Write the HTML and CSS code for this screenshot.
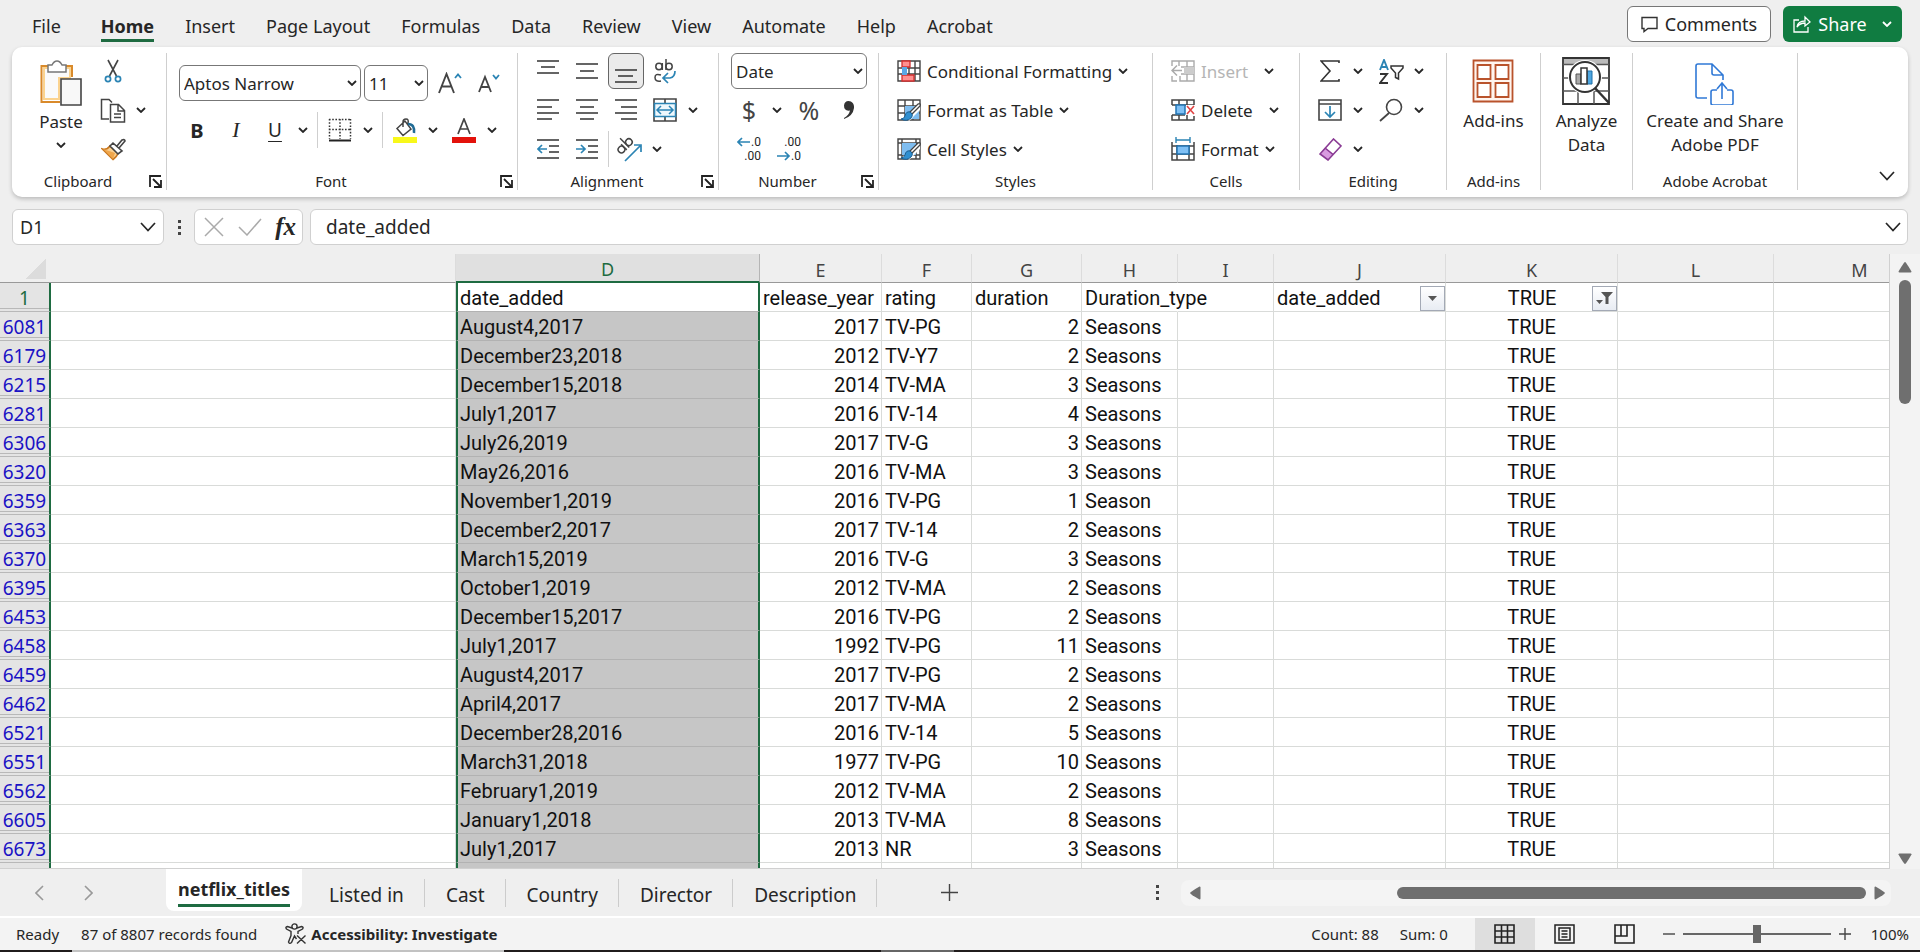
FILE: index.html
```html
<!DOCTYPE html>
<html lang="en">
<head>
    <meta charset="UTF-8">
    <meta name="viewport" content="width=device-width, initial-scale=1.0">
    <title>netflix_titles</title>
    <link rel="stylesheet" href="styles.css">
</head>
<body>
    <!-- shared icons -->
    <svg class="defs" aria-hidden="true">
        <symbol id="chev" viewBox="0 0 10 6"><path d="M1 1l4 4 4-4" fill="none" stroke="currentColor" stroke-width="1.8"/></symbol>
        <symbol id="chev-lg" viewBox="0 0 16 10"><path d="M1 1l7 7.500L15 1" fill="none" stroke="currentColor" stroke-width="1.7"/></symbol>
        <symbol id="launch" viewBox="0 0 13 13"><path d="M1 12V1h11M4 4l7 7M12 5v7H5" fill="none" stroke="#222" stroke-width="1.8"/></symbol>
        <symbol id="brush" viewBox="0 0 24 22"><path d="M23 7 15 15l-2-2 8-8q3-1 2 2z" fill="#fff" stroke="#444" stroke-width="1.3"/><path d="M13 13q-4-1-5 4-1 3-4 3 6 3 10-1 2-2 1-4z" fill="#2f8fd0" stroke="#1b5f93"/></symbol>
    </svg>

    <header class="tab-bar">
        <nav class="ribbon-tabs">
            <a href="#" class="file">File</a>
            <a href="#" class="active">Home</a>
            <a href="#">Insert</a>
            <a href="#">Page Layout</a>
            <a href="#">Formulas</a>
            <a href="#">Data</a>
            <a href="#">Review</a>
            <a href="#">View</a>
            <a href="#">Automate</a>
            <a href="#">Help</a>
            <a href="#">Acrobat</a>
        </nav>
        <div class="top-actions">
            <button class="comments-btn">
                <svg width="17" height="17" viewBox="0 0 17 17"><path d="M1 1.500h15v11H7l-4 3v-3H1z" fill="none" stroke="#333" stroke-width="1.400"/></svg>
                Comments
            </button>
            <button class="share-btn">
                <svg width="18" height="18" viewBox="0 0 18 18"><path d="M6 5H1v12h14v-5M4 12q1-6 8-6V2l5 5-5 4V8q-5 0-8 4z" fill="none" stroke="#fff" stroke-width="1.300"/></svg>
                Share
                <svg class="chev"><use href="#chev"/></svg>
            </button>
        </div>
    </header>

    <div class="ribbon">
        <section class="group clipboard">
            <div class="group-body">
                <button class="big-btn paste">
                    <svg width="42" height="46" viewBox="0 0 42 46"><path d="M10 6H1.500v36H20M25 6h7v11" fill="none" stroke="#d98a2b" stroke-width="2"/><path d="M4 8v31h15V18h11V8z" fill="#fafafa" stroke="#fbd38f" stroke-width="2"/><path d="M8 12V5h4q2-4 5-4t5 4h4v7z" fill="#fff" stroke="#777" stroke-width="1.500"/><path d="M21 19h20v26H21z" fill="#f8f8f8" stroke="#444" stroke-width="1.600"/></svg>
                    <span>Paste</span>
                    <svg class="chev"><use href="#chev"/></svg>
                </button>
                <div class="rows">
                    <div class="row">
                        <button class="icon-btn" aria-label="Cut"><svg width="18" height="24" viewBox="0 0 18 24"><path d="M4 1l8.500 16M14 1 5.500 17" stroke="#444" stroke-width="1.600"/><g fill="none" stroke="#2b84b4" stroke-width="1.700"><circle cx="4" cy="20" r="2.600"/><circle cx="14" cy="20" r="2.600"/></g></svg></button>
                    </div>
                    <div class="row">
                        <button class="icon-btn" aria-label="Copy"><svg width="26" height="25" viewBox="0 0 26 25"><path d="M9 21H1.500V1.500H9l3 3" fill="none" stroke="#444" stroke-width="1.500"/><path d="M10.500 6.500h8l6 6V24h-14zM18 7v6h6M14 16h7M14 19.500h7" fill="none" stroke="#444" stroke-width="1.500"/></svg></button>
                        <button class="drop" aria-label="Copy options"><svg class="chev"><use href="#chev"/></svg></button>
                    </div>
                    <div class="row">
                        <button class="icon-btn" aria-label="Format Painter"><svg width="25" height="23" viewBox="0 0 25 23"><path d="M9 8Q6 12 1.500 11L12 21.500q4-3 5-6z" fill="#f8cf90" stroke="#c9761c" stroke-width="1.600"/><path d="M2 11l12 4-2 6z" fill="#f0a64b"/><path d="M9 8l3-3 9 8-4 3zM16 8l5-6q3-1 3 1l-6 7" fill="#fff" stroke="#444" stroke-width="1.600"/></svg></button>
                    </div>
                </div>
            </div>
            <footer><h2>Clipboard</h2><button class="launch" aria-label="Clipboard settings"><svg width="13" height="13"><use href="#launch"/></svg></button></footer>
        </section>

        <section class="group font">
            <div class="group-body rows">
                <div class="row">
                    <div class="select wide">
                        <select aria-label="Font"><option>Aptos Narrow</option></select>
                        <svg class="chev"><use href="#chev"/></svg>
                    </div>
                    <div class="select size">
                        <select aria-label="Font size"><option>11</option></select>
                        <svg class="chev"><use href="#chev"/></svg>
                    </div>
                    <button class="icon-btn" aria-label="Increase font size"><svg width="24" height="22" viewBox="0 0 24 22"><path d="M1 21 8.500 2 16 21M4 14.500h9" fill="none" stroke="#444" stroke-width="1.900"/><path d="M17 6l3-3.500L23 6" fill="none" stroke="#2b84b4" stroke-width="1.800"/></svg></button>
                    <button class="icon-btn" aria-label="Decrease font size"><svg width="22" height="20" viewBox="0 0 22 20"><path d="M1 19 7 4l6 15M3.500 14h7" fill="none" stroke="#444" stroke-width="1.800"/><path d="M15 2l3 3.500L21 2" fill="none" stroke="#2b84b4" stroke-width="1.800"/></svg></button>
                </div>
                <div class="row">
                    <button class="icon-btn bold">B</button>
                    <button class="icon-btn italic">I</button>
                    <div class="split">
                        <button class="icon-btn underline">U</button>
                        <button class="drop" aria-label="Underline options"><svg class="chev"><use href="#chev"/></svg></button>
                    </div>
                    <span class="sep"></span>
                    <div class="split">
                        <button class="icon-btn" aria-label="Borders"><svg width="24" height="24" viewBox="0 0 24 24"><path d="M1.500 1v20M22.500 1v20M12 1v20M1 1.500h22M1 11.500h22" stroke="#333" stroke-width="1.500" stroke-dasharray="1.600 1.600"/><path d="M1 22.500h22" stroke="#222" stroke-width="2"/></svg></button>
                        <button class="drop" aria-label="Border options"><svg class="chev"><use href="#chev"/></svg></button>
                    </div>
                    <span class="sep"></span>
                    <div class="split">
                        <button class="icon-btn" aria-label="Fill Color"><svg width="24" height="25" viewBox="0 0 24 25"><path d="M4 10.500 12 3l6 8-8 6.500zM10 9V4q0-3 3-3t2 4v3" fill="#fff" stroke="#444" stroke-width="1.500"/><path d="M15 6q7 0 6 9" fill="none" stroke="#1f6a94" stroke-width="2.500"/><path d="M0 19h24v6H0z" fill="#f8f81a"/></svg></button>
                        <button class="drop" aria-label="Fill options"><svg class="chev"><use href="#chev"/></svg></button>
                    </div>
                    <div class="split">
                        <button class="icon-btn" aria-label="Font Color"><svg width="24" height="25" viewBox="0 0 24 25"><path d="M6 16l6-15 6 15M8 11h8" fill="none" stroke="#444" stroke-width="1.700"/><path d="M0 19h24v6H0z" fill="#e3120b"/></svg></button>
                        <button class="drop" aria-label="Font color options"><svg class="chev"><use href="#chev"/></svg></button>
                    </div>
                </div>
            </div>
            <footer><h2>Font</h2><button class="launch" aria-label="Font settings"><svg width="13" height="13"><use href="#launch"/></svg></button></footer>
        </section>

        <section class="group alignment">
            <div class="group-body rows">
                <div class="row">
                    <button class="icon-btn" aria-label="Top Align"><svg width="22" height="24" viewBox="0 0 22 24"><path d="M0 2h22M4 8h14M0 14h22" stroke="#333" stroke-width="1.600"/></svg></button>
                    <button class="icon-btn" aria-label="Middle Align"><svg width="22" height="24" viewBox="0 0 22 24"><path d="M0 5h22M4 12h14M0 19h22" stroke="#333" stroke-width="1.600"/></svg></button>
                    <button class="icon-btn pressed" aria-label="Bottom Align"><svg width="22" height="24" viewBox="0 0 22 24"><path d="M0 11h22M3 17h15M0 23h22" stroke="#333" stroke-width="1.600"/></svg></button>
                    <button class="icon-btn" aria-label="Wrap Text"><svg width="24" height="26" viewBox="0 0 24 26"><g fill="none" stroke="#444" stroke-width="1.500"><circle cx="6" cy="8.500" r="3.200"/><path d="M9.300 5v7M13 1v11"/><circle cx="16" cy="8.500" r="3.200"/><path d="M8 17q-6-2-6 2.500T8 23"/></g><path d="M22 13q0 6-5 7h-6m4-5-5 5 5 5" fill="none" stroke="#2b84b4" stroke-width="1.700"/></svg></button>
                </div>
                <div class="row">
                    <button class="icon-btn" aria-label="Align Left"><svg width="22" height="24" viewBox="0 0 22 24"><path d="M0 2h22M0 9h15M0 15h22M0 21h15" stroke="#333" stroke-width="1.600"/></svg></button>
                    <button class="icon-btn" aria-label="Center"><svg width="22" height="24" viewBox="0 0 22 24"><path d="M0 2h22M4 9h14M0 15h22M4 21h14" stroke="#333" stroke-width="1.600"/></svg></button>
                    <button class="icon-btn" aria-label="Align Right"><svg width="22" height="24" viewBox="0 0 22 24"><path d="M0 2h22M6 9h16M0 15h22M6 21h16" stroke="#333" stroke-width="1.600"/></svg></button>
                    <div class="split">
                        <button class="icon-btn" aria-label="Merge and Center"><svg width="24" height="24" viewBox="0 0 24 24"><path d="M1 1h22v22H1zM12 1v4M12 19v4" fill="#fff" stroke="#444" stroke-width="1.600"/><path d="M1.500 5.500h21v13h-21z" fill="#eef7fc" stroke="#2b84b4" stroke-width="1.500"/><path d="M4 12h16M8 8l-4 4 4 4M16 8l4 4-4 4" fill="none" stroke="#2b84b4" stroke-width="1.500"/></svg></button>
                        <button class="drop" aria-label="Merge options"><svg class="chev"><use href="#chev"/></svg></button>
                    </div>
                </div>
                <div class="row">
                    <button class="icon-btn" aria-label="Decrease Indent"><svg width="22" height="22" viewBox="0 0 22 22"><path d="M0 2h22M12 8h10M12 14h10M0 20h22" stroke="#333" stroke-width="1.600"/><path d="M10 11H1m4-4-4 4 4 4" fill="none" stroke="#2b84b4" stroke-width="1.700"/></svg></button>
                    <button class="icon-btn" aria-label="Increase Indent"><svg width="22" height="22" viewBox="0 0 22 22"><path d="M0 2h22M12 8h10M12 14h10M0 20h22" stroke="#333" stroke-width="1.600"/><path d="M0 11h9M5 7l4 4-4 4" fill="none" stroke="#2b84b4" stroke-width="1.700"/></svg></button>
                    <span class="sep"></span>
                    <div class="split">
                        <button class="icon-btn" aria-label="Orientation"><svg width="26" height="26" viewBox="0 0 26 26"><g transform="rotate(-45 9 10)" fill="none" stroke="#444" stroke-width="1.500"><circle cx="4" cy="10" r="3.300"/><path d="M7.500 6v8M11 1v13"/><circle cx="14.500" cy="10" r="3.300"/></g><path d="M9 25 24 10M18 9h7v7" fill="none" stroke="#2b84b4" stroke-width="1.700"/></svg></button>
                        <button class="drop" aria-label="Orientation options"><svg class="chev"><use href="#chev"/></svg></button>
                    </div>
                </div>
            </div>
            <footer><h2>Alignment</h2><button class="launch" aria-label="Alignment settings"><svg width="13" height="13"><use href="#launch"/></svg></button></footer>
        </section>

        <section class="group number">
            <div class="group-body rows">
                <div class="row">
                    <div class="select format">
                        <select aria-label="Number format"><option>Date</option></select>
                        <svg class="chev"><use href="#chev"/></svg>
                    </div>
                </div>
                <div class="row">
                    <div class="split">
                        <button class="icon-btn symbol">$</button>
                        <button class="drop" aria-label="Currency options"><svg class="chev"><use href="#chev"/></svg></button>
                    </div>
                    <button class="icon-btn symbol">%</button>
                    <button class="icon-btn" aria-label="Comma Style"><svg width="12" height="20" viewBox="0 0 12 20"><path d="M5.500 1C9 1 11.500 4 11 8q-1 8-10 11v-1q5-3 6-7.500Q1 11.500 1 5.500 1.500 1 5.500 1z" fill="#333"/></svg></button>
                </div>
                <div class="row">
                    <button class="icon-btn decimals"><svg width="14" height="10" viewBox="0 0 14 10"><path d="M13 5H1m4-4-4 4 4 4" fill="none" stroke="#2b84b4" stroke-width="1.700"/></svg><span>.0</span><span>.00</span></button>
                    <button class="icon-btn decimals"><span>.00</span><svg width="14" height="10" viewBox="0 0 14 10"><path d="M0 5h12M8 1l4 4-4 4" fill="none" stroke="#2b84b4" stroke-width="1.700"/></svg><span>.0</span></button>
                </div>
            </div>
            <footer><h2>Number</h2><button class="launch" aria-label="Number settings"><svg width="13" height="13"><use href="#launch"/></svg></button></footer>
        </section>

        <section class="group styles">
            <div class="group-body rows">
                <button class="text-btn">
                    <svg width="24" height="22" viewBox="0 0 24 22"><path d="M1 1h22v20H1zM1 8h22M1 14h22M6 1v20M12 1v20M18 1v20" fill="#fff" stroke="#444" stroke-width="1.400"/><path d="M5 1h8v6H5zM5 15h12v6H5z" fill="#ff8f8f" stroke="#d22f2f" stroke-width="1.300"/><path d="M5 7h5v8H5z" fill="#5aa7e6"/></svg>
                    Conditional Formatting <svg class="chev"><use href="#chev"/></svg>
                </button>
                <button class="text-btn">
                    <svg width="24" height="22" viewBox="0 0 24 22"><path d="M1 1h22v20H1zM8 1v20M16 1v20M1 7h22M1 14h22" fill="#fff" stroke="#444" stroke-width="1.400"/><path d="M8 7h14v13H8z" fill="#7fbdf0"/><path d="M9 18 23 5v6L12 22z" fill="#fff"/><use href="#brush" width="24" height="22"/></svg>
                    Format as Table <svg class="chev"><use href="#chev"/></svg>
                </button>
                <button class="text-btn">
                    <svg width="24" height="22" viewBox="0 0 24 22"><path d="M1 1h22v20H1zM5 1v20M19 1v20M1 5h22M1 17h22" fill="#fff" stroke="#444" stroke-width="1.400"/><path d="M5 5h14v12H5z" fill="#7fbdf0"/><path d="M9 18 23 5v6L12 22z" fill="#fff"/><use href="#brush" width="24" height="22"/></svg>
                    Cell Styles <svg class="chev"><use href="#chev"/></svg>
                </button>
            </div>
            <footer><h2>Styles</h2></footer>
        </section>

        <section class="group cells">
            <div class="group-body rows">
                <div class="row">
                    <button class="text-btn" disabled>
                        <svg width="24" height="22" viewBox="0 0 24 22"><path d="M1 6V1h22v20H9v-5M1 16v5h5M8 1v5M16 1v20M10 7h13M10 14h13" fill="none" stroke="#aaa" stroke-width="1.400"/><path d="M13 7h10v7H13z" fill="#ccc"/><path d="M11 10.500H1m5-5-5 5 5 5" fill="none" stroke="#aaa" stroke-width="1.500"/></svg>
                        Insert
                    </button>
                    <button class="drop" aria-label="Insert options"><svg class="chev"><use href="#chev"/></svg></button>
                </div>
                <div class="row">
                    <button class="text-btn">
                        <svg width="24" height="22" viewBox="0 0 24 22"><path d="M1 6V1h22v5M1 16v5h22v-4M8 1v5M16 1v5M8 16v5M16 16v5M1 6h22M1 16h13" fill="none" stroke="#444" stroke-width="1.500"/><path d="M5 6h9v9H5z" fill="#7fc0f5" stroke="#2376b5" stroke-width="1.500"/><path d="M15 6h9v10h-9z" fill="#fff"/><path d="M16 7l7 8M23 7l-7 8" stroke="#e04343" stroke-width="1.600"/></svg>
                        Delete
                    </button>
                    <button class="drop" aria-label="Delete options"><svg class="chev"><use href="#chev"/></svg></button>
                </div>
                <div class="row">
                    <button class="text-btn">
                        <svg width="24" height="24" viewBox="0 0 24 24"><path d="M1 5v18h22V5M6 8v15M18 8v15M1 9h22M1 17h22" fill="none" stroke="#444" stroke-width="1.500"/><path d="M6 9h12v8H6z" fill="#7fc0f5" stroke="#2376b5" stroke-width="1.500"/><path d="M5 3h14M5 0v6M19 0v6" stroke="#2b84b4" stroke-width="1.400"/></svg>
                        Format <svg class="chev"><use href="#chev"/></svg>
                    </button>
                </div>
            </div>
            <footer><h2>Cells</h2></footer>
        </section>

        <section class="group editing">
            <div class="group-body rows">
                <div class="row">
                    <div class="split">
                        <button class="icon-btn" aria-label="AutoSum"><svg width="20" height="22" viewBox="0 0 20 22"><path d="M19 3V1H1l9 10-9 10h18v-2" fill="none" stroke="#333" stroke-width="1.600"/></svg></button>
                        <button class="drop" aria-label="Sum options"><svg class="chev"><use href="#chev"/></svg></button>
                    </div>
                    <div class="split">
                        <button class="icon-btn" aria-label="Sort and Filter"><svg width="25" height="25" viewBox="0 0 25 25"><path d="M1 11 5 1l4 10M2.500 8h5" fill="none" stroke="#2b84b4" stroke-width="1.900"/><path d="M1 15h7L1 24h8" fill="none" stroke="#333" stroke-width="1.900"/><path d="M12 7h12v2l-4.500 5v6l-3-1.500V14L12 9z" fill="none" stroke="#333" stroke-width="1.500"/></svg></button>
                        <button class="drop" aria-label="Sort options"><svg class="chev"><use href="#chev"/></svg></button>
                    </div>
                </div>
                <div class="row">
                    <div class="split">
                        <button class="icon-btn" aria-label="Fill"><svg width="24" height="22" viewBox="0 0 24 22"><path d="M1 1h22v20H1zM1 5h22" fill="none" stroke="#444" stroke-width="1.600"/><path d="M12 7v10m-5-4 5 5 5-5" fill="none" stroke="#2b84b4" stroke-width="1.700"/></svg></button>
                        <button class="drop" aria-label="Fill options"><svg class="chev"><use href="#chev"/></svg></button>
                    </div>
                    <div class="split">
                        <button class="icon-btn" aria-label="Find and Select"><svg width="24" height="24" viewBox="0 0 24 24"><circle cx="15" cy="9" r="7.500" fill="none" stroke="#444" stroke-width="1.600"/><path d="M10 15l-9 8" stroke="#444" stroke-width="1.700"/></svg></button>
                        <button class="drop" aria-label="Find options"><svg class="chev"><use href="#chev"/></svg></button>
                    </div>
                </div>
                <div class="row">
                    <div class="split">
                        <button class="icon-btn" aria-label="Clear"><svg width="23" height="23" viewBox="0 0 23 23"><path d="M1 16 6 9.500l8 6L9 22z" fill="#d99be0"/><path d="M1 16 14.500 1 22 8 9 22zM6 10l8 6.500" fill="none" stroke="#8a3b94" stroke-width="1.600"/></svg></button>
                        <button class="drop" aria-label="Clear options"><svg class="chev"><use href="#chev"/></svg></button>
                    </div>
                </div>
            </div>
            <footer><h2>Editing</h2></footer>
        </section>

        <section class="group addins">
            <div class="group-body">
                <button class="big-btn">
                    <svg width="42" height="48" viewBox="0 0 42 48"><path d="M1.500 3.500h39v41h-39z" fill="#fff5ef" stroke="#b9532c" stroke-width="1.800"/><path d="M5.500 8h13v14h-13zM23.500 8h13v14h-13zM5.500 26h13v14h-13zM23.500 26h13v14h-13z" fill="#fff" stroke="#b9532c" stroke-width="1.800"/></svg>
                    <span>Add-ins</span>
                </button>
            </div>
            <footer><h2>Add-ins</h2></footer>
        </section>

        <section class="group analyze">
            <div class="group-body">
                <button class="big-btn">
                    <svg width="48" height="48" viewBox="0 0 48 48"><path d="M1 1h46v46H1z" fill="#fff" stroke="#333" stroke-width="1.800"/><path d="M2 2h44v5H2z" fill="#bbb"/><path d="M1 7.500h46M1 21h46M1 34h46M16 34v13M32 34v13" stroke="#555" stroke-width="1.500"/><circle cx="23" cy="20" r="17" fill="#fff"/><circle cx="23" cy="20" r="15" fill="#fff" stroke="#333" stroke-width="2"/><path d="M14 17h5v10h-5z" fill="#aaa" stroke="#555"/><path d="M25 14h5v13h-5z" fill="#4ea6e0" stroke="#1d6fa8"/><path d="M19 11h6v16h-6z" fill="#fff" stroke="#333" stroke-width="1.500"/><path d="M33 31l14 15" stroke="#333" stroke-width="2.500"/></svg>
                    <span>Analyze<br>Data</span>
                </button>
            </div>
        </section>

        <section class="group acrobat">
            <div class="group-body">
                <button class="big-btn">
                    <svg width="39" height="48" viewBox="0 0 39 48"><path d="M12 41H3q-2 0-2-2V9q0-2 2-2h14l11 11v5M17 7v9q0 2 2 2h9" fill="none" stroke="#3079d6" stroke-width="1.600"/><path d="M22 33h-4q-2 0-2 2v11q0 2 2 2h18q2 0 2-2V35q0-2-2-2h-4M27 42V26m-5 6 5-6 5 6" fill="none" stroke="#3079d6" stroke-width="1.600"/></svg>
                    <span>Create and Share<br>Adobe PDF</span>
                </button>
            </div>
            <footer><h2>Adobe Acrobat</h2></footer>
        </section>
        <button class="collapse" aria-label="Collapse ribbon"><svg class="chev-lg"><use href="#chev-lg"/></svg></button>
    </div>

    <div class="formula-bar">
        <div class="name-box">
            <input type="text" value="D1" aria-label="Name box">
            <button aria-label="Names"><svg class="chev-lg"><use href="#chev-lg"/></svg></button>
        </div>
        <span class="kebab"><i></i><i></i><i></i></span>
        <div class="fx-box">
            <button aria-label="Cancel"><svg width="20" height="20" viewBox="0 0 20 20"><path d="M1 1l18 18M19 1 1 19" stroke="#aaa" stroke-width="1.500"/></svg></button>
            <button aria-label="Enter"><svg width="24" height="18" viewBox="0 0 24 18"><path d="M1 9l8 8L23 1" fill="none" stroke="#aaa" stroke-width="1.500"/></svg></button>
            <button class="fx">fx</button>
        </div>
        <div class="formula">
            <input type="text" value="date_added" aria-label="Formula">
            <button aria-label="Expand"><svg class="chev-lg"><use href="#chev-lg"/></svg></button>
        </div>
    </div>

    <main class="sheet">
        <div class="grid">
            <table>
                <colgroup>
                    <col class="c-num"><col class="c-c"><col class="c-d"><col class="c-e"><col class="c-f"><col class="c-g"><col class="c-h"><col class="c-h"><col class="c-j"><col class="c-j"><col class="c-l"><col class="c-j">
                </colgroup>
                <thead>
                    <tr>
                        <th class="corner"></th><th></th><th class="sel">D</th><th>E</th><th>F</th><th>G</th><th>H</th><th>I</th><th>J</th><th>K</th><th>L</th><th>M</th>
                    </tr>
                </thead>
                <tbody id="rows">
                    <tr class="first">
                        <th>1</th><td></td><td class="sel">date_added</td><td>release_year</td><td>rating</td><td>duration</td><td class="spill">Duration_type</td><td></td>
                        <td><div class="filter-cell">date_added<button class="filter" aria-label="Filter"><svg width="9" height="5" viewBox="0 0 9 5"><path d="M0 0h9L4.500 5z" fill="#555"/></svg></button></div></td>
                        <td class="mid"><div class="filter-cell"><span>TRUE</span><button class="filter" aria-label="Filtered"><svg width="17" height="13" viewBox="0 0 17 13"><path d="M5 0h12l-4.500 5v7h-3V5zM0 8h7l-3.500 4z" fill="#555"/></svg></button></div></td>
                        <td></td><td></td>
                    </tr>
                </tbody>
            </table>
        </div>
        <div class="v-scroll">
            <svg width="14" height="11" viewBox="0 0 14 11"><path d="M7 0q1 0 6.500 9.500 0 1-1 1h-11q-1 0-1-1Q6 0 7 0z" fill="#6f6f6f"/></svg>
            <div class="v-thumb"></div>
            <svg class="down" width="14" height="11" viewBox="0 0 14 11"><path d="M7 11q1 0 6.500-9.500 0-1-1-1h-11q-1 0-1 1Q6 11 7 11z" fill="#6f6f6f"/></svg>
        </div>
    </main>

    <div class="sheet-bar">
        <div class="sheet-nav">
            <button aria-label="Previous sheet"><svg width="9" height="16" viewBox="0 0 9 16"><path d="M8 1 1 8l7 7" fill="none" stroke="#999" stroke-width="1.600"/></svg></button>
            <button aria-label="Next sheet"><svg width="9" height="16" viewBox="0 0 9 16"><path d="M1 1l7 7-7 7" fill="none" stroke="#999" stroke-width="1.600"/></svg></button>
        </div>
        <nav class="sheet-tabs">
            <button class="active"><span>netflix_titles</span></button>
            <button>Listed in</button>
            <button>Cast</button>
            <button>Country</button>
            <button>Director</button>
            <button>Description</button>
        </nav>
        <button class="add-sheet" aria-label="New sheet"><svg width="17" height="17" viewBox="0 0 17 17"><path d="M8.500 0v17M0 8.500h17" stroke="#444" stroke-width="1.400"/></svg></button>
        <span class="kebab"><i></i><i></i><i></i></span>
        <div class="h-scroll">
            <svg width="11" height="14" viewBox="0 0 11 14"><path d="M0 7q0-1 9.500-6.500 1 0 1 1v11q0 1-1 1Q0 8 0 7z" fill="#6f6f6f"/></svg>
            <div class="h-thumb"></div>
            <svg width="11" height="14" viewBox="0 0 11 14"><path d="M11 7q0-1-9.500-6.500-1 0-1 1v11q0 1 1 1Q11 8 11 7z" fill="#6f6f6f"/></svg>
        </div>
    </div>

    <footer class="status-bar">
        <span class="ready">Ready</span>
        <span class="records">87 of 8807 records found</span>
        <button class="access">
            <svg width="22" height="22" viewBox="0 0 22 22"><g fill="none" stroke="#333" stroke-width="1.400"><circle cx="9.500" cy="3.500" r="2.600"/><path d="M7 5 2.500 3.500Q0 4 1.500 6L6 8.500v4L3.500 19q1 2.500 3 .500l3-6.500 2 3M12 5l4.500-1.500Q19 4 17.500 6L13 8.500V11M12 12.500l8.500 8M20.500 12.500l-8.500 8"/></g></svg>
            Accessibility: Investigate
        </button>
        <span class="count">Count: 88</span>
        <span class="sum">Sum: 0</span>
        <div class="views">
            <button class="view on" aria-label="Normal"><svg width="21" height="20" viewBox="0 0 21 20"><path d="M1 1h19v18H1zM1 7h19M1 13h19M7.500 1v18M13.500 1v18" fill="none" stroke="#222" stroke-width="1.600"/></svg></button>
            <button class="view" aria-label="Page Layout"><svg width="21" height="20" viewBox="0 0 21 20"><path d="M1 1h19v18H1zM5 4h11v12H5zM7.500 7h6M7.500 10h6M7.500 13h6" fill="none" stroke="#222" stroke-width="1.500"/></svg></button>
            <button class="view" aria-label="Page Break"><svg width="21" height="20" viewBox="0 0 21 20"><path d="M1 1h19v18H1zM1 12h12V1M7 1v11" fill="none" stroke="#222" stroke-width="1.600"/></svg></button>
        </div>
        <button class="zoom-btn" aria-label="Zoom out"><svg width="12" height="12" viewBox="0 0 12 12"><path d="M0 6h12" stroke="#444" stroke-width="1.400"/></svg></button>
        <input type="range" min="0" max="200" value="100" aria-label="Zoom">
        <button class="zoom-btn" aria-label="Zoom in"><svg width="12" height="12" viewBox="0 0 12 12"><path d="M0 6h12M6 0v12" stroke="#444" stroke-width="1.400"/></svg></button>
        <span class="percent">100%</span>
    </footer>
    <script src="script.js"></script>
</body>
</html>
```

FILE: styles.css
```css
* {
    box-sizing: border-box;
}

body {
    margin: 0;
    height: 100vh;
    display: flex;
    flex-direction: column;
    overflow: hidden;
    background-color: #efefef;
    color: #262626;
    font-family: 'Noto Sans', 'Open Sans', sans-serif;
    font-size: 17px;
}

button,
input,
select {
    font: inherit;
    color: inherit;
    background: none;
    border: none;
    padding: 0;
    margin: 0;
}

button {
    display: flex;
    align-items: center;
    justify-content: center;
    flex-shrink: 0;
    white-space: nowrap;
}

svg {
    display: block;
    flex-shrink: 0;
}

.defs {
    position: absolute;
    width: 0;
    height: 0;
}

.chev {
    width: 10px;
    height: 6px;
}

.chev-lg {
    width: 16px;
    height: 10px;
}

/* Tabs */
.tab-bar {
    display: flex;
    justify-content: space-between;
    height: 47px;
    padding: 6px 18px 0 32px;
}

.ribbon-tabs {
    display: flex;
    gap: 31px;
    height: 36px;
}

.ribbon-tabs a {
    color: #262626;
    text-decoration: none;
    font-size: 18px;
    line-height: 40px;
    white-space: nowrap;
}

.ribbon-tabs .file {
    margin-right: 9px;
}

.ribbon-tabs .active {
    font-weight: bold;
    border-bottom: 3px solid #1e6b41;
}

.top-actions {
    display: flex;
    gap: 12px;
    font-size: 18px;
}

.comments-btn,
.share-btn {
    height: 36px;
    gap: 7px;
    border-radius: 6px;
}

.comments-btn {
    width: 144px;
    border: 1px solid #777;
    background-color: #fff;
}

.share-btn {
    width: 119px;
    background-color: #107c41;
    color: #fff;
}

.share-btn .chev {
    margin-left: 8px;
}

/* Ribbon */
.ribbon {
    display: flex;
    height: 150px;
    margin: 0 12px;
    padding: 6px 0 5px;
    border-radius: 10px;
    background-color: #fff;
    box-shadow: 0 2px 4px rgba(0, 0, 0, 0.22);
}

.group {
    display: flex;
    flex-direction: column;
    justify-content: space-between;
    height: 137px;
    padding: 0 0 0 12px;
    border-right: 1px solid #cfcfcf;
}

.group-body {
    display: flex;
    height: 114px;
}

.rows {
    display: flex;
    flex-direction: column;
    gap: 3px;
}

.row {
    display: flex;
    align-items: center;
    gap: 3px;
    height: 36px;
}

.split {
    display: flex;
}

.group footer {
    display: flex;
    align-items: center;
    height: 18px;
}

.group h2 {
    flex: 1;
    margin: 0;
    font-size: 15px;
    font-weight: normal;
    line-height: 18px;
    text-align: center;
    white-space: nowrap;
}

.launch {
    width: 22px;
    height: 18px;
}

.clipboard { width: 155px; }
.font { width: 351px; }
.alignment { width: 201px; }
.number { width: 160px; }
.styles { width: 274px; }
.cells { width: 147px; }
.editing { width: 147px; }
.addins { width: 94px; }
.analyze { width: 92px; }
.acrobat { width: 165px; }

.clipboard footer,
.font footer,
.alignment footer,
.number footer {
    margin-left: -12px;
}

.styles,
.cells,
.editing {
    padding-right: 12px;
}

.addins,
.analyze,
.acrobat {
    padding: 0;
}

.addins .group-body,
.analyze .group-body,
.acrobat .group-body {
    justify-content: center;
}

.icon-btn {
    width: 36px;
    height: 36px;
}

.drop {
    width: 20px;
    height: 36px;
}

.pressed {
    border: 1px solid #666;
    border-radius: 6px;
    background-color: #ebebeb;
}

.sep {
    width: 1px;
    height: 36px;
    background-color: #cfcfcf;
    margin: 0 1px;
}

.alignment .sep {
    margin: 0 -1px 0 0;
}

.big-btn {
    flex-direction: column;
    justify-content: flex-start;
    padding-top: 4px;
    line-height: 24px;
}

.big-btn span {
    margin-top: 4px;
}

.paste {
    width: 52px;
    margin-left: 11px;
    padding-top: 7px;
}

.paste .chev {
    margin-top: 8px;
}

.clipboard .rows {
    margin-left: 8px;
}

.clipboard .row {
    gap: 0;
}

.font .group-body {
    padding-top: 12px;
    gap: 11px;
}

.select {
    position: relative;
    height: 36px;
}

.select select {
    width: 100%;
    height: 36px;
    padding-left: 4px;
    appearance: none;
    border: 1px solid #777;
    border-radius: 6px;
    background-color: #fff;
}

.select .chev {
    position: absolute;
    right: 4px;
    top: 15px;
    pointer-events: none;
}

.wide { width: 182px; }

.size {
    width: 64px;
    margin-right: 1px;
}

.format { width: 136px; }

.bold {
    font-weight: bold;
    font-size: 20px;
}

.italic {
    font-family: 'Liberation Serif', serif;
    font-style: italic;
    font-size: 22px;
}

.underline {
    font-size: 19px;
    text-decoration: underline;
    text-underline-offset: 4px;
}

.number .row {
    gap: 4px;
}

.symbol {
    font-size: 25px;
    color: #444;
}

.decimals {
    flex-wrap: wrap;
    justify-content: flex-end;
    align-content: center;
    padding: 0 6px 0 2px;
    font-family: Roboto, sans-serif;
    font-size: 12px;
    line-height: 14px;
}

.text-btn {
    justify-content: flex-start;
    gap: 6px;
    height: 36px;
    padding-left: 6px;
}

.text-btn:disabled {
    color: #b5b5b5;
}

.cells .row {
    gap: 11px;
}

.editing .row {
    gap: 5px;
}

.collapse {
    margin: 117px 13px 0 auto;
    width: 16px;
    height: 12px;
}

/* Formula bar */
.formula-bar {
    display: flex;
    align-items: center;
    height: 36px;
    margin: 12px 12px 9px;
    font-size: 19px;
}

.name-box,
.fx-box,
.formula {
    display: flex;
    align-items: center;
    height: 36px;
    border: 1px solid #d0d0d0;
    border-radius: 6px;
    background-color: #fff;
}

.name-box {
    width: 152px;
    padding: 0 7px;
    font-size: 18px;
}

.name-box input,
.formula input {
    flex: 1;
    min-width: 0;
}

.kebab {
    display: flex;
    flex-direction: column;
    gap: 3px;
}

.kebab i {
    width: 3px;
    height: 3px;
    background-color: #444;
}

.formula-bar .kebab {
    margin: 0 13px 0 14px;
}

.fx-box {
    width: 109px;
    justify-content: space-between;
    padding: 0 6px 0 9px;
}

.fx {
    font-family: 'Liberation Serif', serif;
    font-style: italic;
    font-weight: bold;
    font-size: 25px;
    line-height: 30px;
}

.formula {
    flex: 1;
    margin-left: 7px;
    padding: 0 6px 0 15px;
}

/* Grid */
.sheet {
    display: flex;
    flex: 1;
    min-height: 0;
}

.grid {
    flex: 1;
    min-width: 0;
    overflow: hidden;
    border-right: 1px solid #d0d0d0;
    border-bottom: 1px solid #d0d0d0;
}

.grid table {
    table-layout: fixed;
    width: 1946px;
    border-collapse: separate;
    border-spacing: 0;
    font-family: Roboto, sans-serif;
    font-size: 20px;
    color: #111;
}

.c-num { width: 51px; }
.c-c { width: 405px; }
.c-d { width: 304px; }
.c-e { width: 122px; }
.c-f { width: 90px; }
.c-g { width: 110px; }
.c-h { width: 96px; }
.c-j { width: 172px; }
.c-l { width: 156px; }

.grid th,
.grid td {
    height: 29px;
    padding: 2px 3px 0;
    line-height: 26px;
    white-space: nowrap;
    font-weight: normal;
}

.grid td {
    background-color: #fff;
    border-right: 1px solid #d9dbd9;
    border-bottom: 1px solid #d9dbd9;
}

.grid thead th {
    padding-top: 3px;
    font-family: 'Noto Sans', sans-serif;
    font-size: 18px;
    line-height: 24px;
    color: #444;
    border-right: 1px solid #dcdcdc;
    border-bottom: 1px solid #999;
}

.grid thead .corner {
    background: linear-gradient(135deg, transparent 50%, #dcdcdc 50%) 26px 5px / 20px 20px no-repeat;
    border-right: none;
}

.grid thead .sel {
    background-color: #e0e0e0;
    color: #1e6b41;
    border-bottom: 2px solid #1e6b41;
    border-right-color: #b5b5b5;
}

.grid tbody th {
    padding: 2px 0 0;
    background-color: #e4e4e4;
    border-right: 2px solid #1e6b41;
    border-bottom: 1px solid #b8b8b8;
    font-family: 'Noto Sans', sans-serif;
    font-size: 19px;
    color: #1a12c4;
    box-shadow: inset 0 -2px #e4e4e4, inset 0 -3px #b8b8b8;
}

.grid .first th {
    color: #1e6b41;
}

.grid tbody td.sel {
    padding-left: 2px;
    background-color: #c6c6c6;
    border-color: #b2b2b2;
    border-left: 2px solid #1e6b41;
    border-right: 2px solid #1e6b41;
}

.grid .first td.sel {
    background-color: #fff;
}

.grid td.right {
    text-align: right;
    padding-right: 2px;
}

.grid td.mid {
    text-align: center;
}

/* long header runs over the next, empty cell */
.grid td.spill {
    position: relative;
    border-right-color: transparent;
    overflow: visible;
}

.filter-cell {
    display: flex;
    align-items: center;
    justify-content: space-between;
    height: 26px;
    margin-right: -3px;
}

.filter-cell span {
    flex: 1;
    padding-left: 23px;
}

.filter {
    width: 25px;
    height: 25px;
    border: 1px solid #a3a9b5;
    background: linear-gradient(#fff, #e8ecf3);
}

.v-scroll {
    display: flex;
    flex-direction: column;
    align-items: center;
    width: 30px;
    padding: 8px 0 5px;
    background-color: #f3f3f3;
}

.v-thumb {
    width: 12px;
    height: 124px;
    margin-top: 7px;
    border-radius: 6px;
    background-color: #6f6f6f;
}

.down {
    margin-top: auto;
}

/* Sheet tabs */
.sheet-bar {
    display: flex;
    align-items: center;
    height: 47px;
}

.sheet-nav {
    display: flex;
    width: 166px;
    gap: 40px;
    padding-left: 35px;
}

.sheet-tabs {
    display: flex;
    align-items: flex-start;
    height: 47px;
}

.sheet-tabs button {
    height: 28px;
    margin-top: 10px;
    padding: 3px 20px 0 21px;
    border-right: 1px solid #ccc;
    font-size: 19px;
}

.sheet-tabs .active {
    height: 42px;
    margin: 0 6px 0 0;
    padding: 0 12px;
    border: none;
    border-radius: 0 0 8px 8px;
    background-color: #fff;
    font-size: 18px;
    font-weight: bold;
}

.sheet-tabs .active span {
    line-height: 29px;
    margin-top: 2px;
    border-bottom: 3px solid #1e6b41;
}

.add-sheet {
    margin: 0 auto 0 64px;
}

.h-scroll {
    display: flex;
    align-items: center;
    width: 37%;
    height: 26px;
    margin: 0 29px 0 22px;
    padding: 0 6px 0 9px;
    border-radius: 8px;
    background-color: #f4f4f4;
}

.h-thumb {
    width: 469px;
    height: 12px;
    margin: 0 8px 0 auto;
    border-radius: 6px;
    background-color: #6f6f6f;
}

/* Status bar */
.status-bar {
    display: flex;
    align-items: center;
    height: 36px;
    padding: 0 11px 2px 16px;
    /* strip of the desktop showing under the window */
    background: linear-gradient(90deg, #201c1c 72px, #c2c2c2 72px, #c2c2c2 504px, #201c1c 504px, #201c1c 881px, #666 881px, #666 954px, #201c1c 954px) bottom / 100% 2px no-repeat #f3f3f3;
    border-top: 2px solid #fff;
    font-size: 15px;
    white-space: nowrap;
}

.records {
    margin-left: 22px;
}

.access {
    gap: 4px;
    margin: 0 auto 0 28px;
    font-weight: bold;
}

.sum {
    margin: 0 27px 0 21px;
}

.views {
    display: flex;
    margin-right: 8px;
}

.view {
    width: 60px;
    height: 32px;
}

.view.on {
    background-color: #dedede;
}

.zoom-btn {
    width: 12px;
    height: 32px;
}

.status-bar input {
    width: 148px;
    height: 18px;
    margin: 0 8px;
    appearance: none;
}

.status-bar input::-webkit-slider-runnable-track {
    height: 2px;
    background-color: #666;
}

.status-bar input::-webkit-slider-thumb {
    appearance: none;
    width: 8px;
    height: 18px;
    margin-top: -8px;
    background-color: #666;
}

.percent {
    margin-left: 20px;
}
```

FILE: script.js
```js
// row number, date_added, release_year, rating, duration, Duration_type
const titles = [
    [6081, 'August4,2017', 2017, 'TV-PG', 2, 'Seasons'],
    [6179, 'December23,2018', 2012, 'TV-Y7', 2, 'Seasons'],
    [6215, 'December15,2018', 2014, 'TV-MA', 3, 'Seasons'],
    [6281, 'July1,2017', 2016, 'TV-14', 4, 'Seasons'],
    [6306, 'July26,2019', 2017, 'TV-G', 3, 'Seasons'],
    [6320, 'May26,2016', 2016, 'TV-MA', 3, 'Seasons'],
    [6359, 'November1,2019', 2016, 'TV-PG', 1, 'Season'],
    [6363, 'December2,2017', 2017, 'TV-14', 2, 'Seasons'],
    [6370, 'March15,2019', 2016, 'TV-G', 3, 'Seasons'],
    [6395, 'October1,2019', 2012, 'TV-MA', 2, 'Seasons'],
    [6453, 'December15,2017', 2016, 'TV-PG', 2, 'Seasons'],
    [6458, 'July1,2017', 1992, 'TV-PG', 11, 'Seasons'],
    [6459, 'August4,2017', 2017, 'TV-PG', 2, 'Seasons'],
    [6462, 'April4,2017', 2017, 'TV-MA', 2, 'Seasons'],
    [6521, 'December28,2016', 2016, 'TV-14', 5, 'Seasons'],
    [6551, 'March31,2018', 1977, 'TV-PG', 10, 'Seasons'],
    [6562, 'February1,2019', 2012, 'TV-MA', 2, 'Seasons'],
    [6605, 'January1,2018', 2013, 'TV-MA', 8, 'Seasons'],
    [6673, 'July1,2017', 2013, 'NR', 3, 'Seasons']
];

const rows = document.getElementById('rows');

titles.forEach(([num, date, year, rating, duration, type]) => {
    rows.insertAdjacentHTML('beforeend', `<tr>
        <th>${num}</th><td></td><td class="sel">${date}</td>
        <td class="right">${year}</td><td>${rating}</td><td class="right">${duration}</td>
        <td>${type}</td><td></td><td></td><td class="mid">TRUE</td><td></td><td></td>
    </tr>`);
});

// empty row cut off by the sheet tabs
rows.insertAdjacentHTML('beforeend', '<tr><th></th><td></td><td class="sel"></td>' + '<td></td>'.repeat(9) + '</tr>');
```
